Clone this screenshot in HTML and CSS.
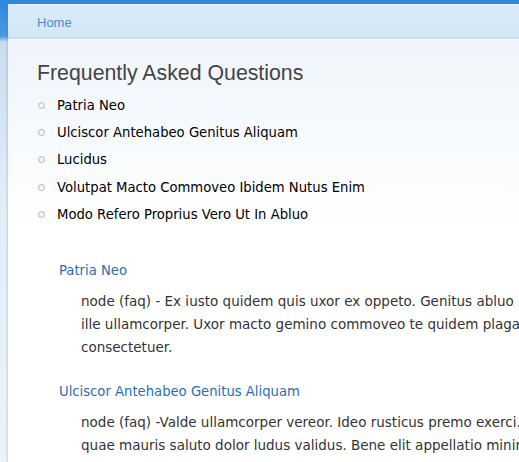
FILE: index.html
```html
<!DOCTYPE html>
<html>
<head>
<meta charset="utf-8">
<link rel="stylesheet" href="styles.css">
</head>
<body>
<div class="page">
  <div class="panel">
    <div class="nav"><a class="nav-link" href="#">Home</a></div>
    <div class="content">
      <h1 class="title">Frequently Asked Questions</h1>
      <ul class="faq-list">
        <li>Patria Neo</li>
        <li>Ulciscor Antehabeo Genitus Aliquam</li>
        <li>Lucidus</li>
        <li>Volutpat Macto Commoveo Ibidem Nutus Enim</li>
        <li>Modo Refero Proprius Vero Ut In Abluo</li>
      </ul>
      <div class="answers">
        <div class="qa">
          <a class="question" href="#">Patria Neo</a>
          <p class="answer">node (faq) - Ex iusto quidem quis uxor ex oppeto. Genitus abluo<br>ille ullamcorper. Uxor macto gemino commoveo te quidem plaga ea consectetuer.</p>
        </div>
        <div class="qa">
          <a class="question" href="#">Ulciscor Antehabeo Genitus Aliquam</a>
          <p class="answer">node (faq) -Valde ullamcorper vereor. Ideo rusticus premo exerci. Te quae mauris saluto dolor ludus validus. Bene elit appellatio minim ea consectetuer. Quia iusto.</p>
        </div>
      </div>
    </div>
  </div>
</div>
</body>
</html>
```
FILE: styles.css
```css
html, body {
  margin: 0;
  padding: 0;
  height: 100%;
  overflow: hidden;
}
body {
  background: linear-gradient(to bottom, #2f86de 0px, #4a98e4 36px, #c9dcef 42px, #e2edf8 200px, #ebf3fb 462px);
}
.page {
  padding: 4px 0 0 8px;
  height: 100%;
  box-sizing: border-box;
}
.panel {
  height: 100%;
  overflow: hidden;
  background: linear-gradient(to bottom, #edf3fa 0px, #f5f9fd 110px, #ffffff 230px);
  box-shadow: -1px 0 2px rgba(60, 110, 170, 0.25);
}
.nav {
  height: 35px;
  box-sizing: border-box;
  border-top: 1px solid #e8f3fc;
  border-bottom: 2px solid #c6dcf1;
  background: linear-gradient(to bottom, #d9ebf9, #d3e7f7);
  padding-left: 29px;
  padding-top: 2px;
  display: flex;
  align-items: center;
  position: relative;
}
.nav::after {
  content: "";
  position: absolute;
  left: 0;
  right: 0;
  bottom: -3px;
  height: 1px;
  background: #ffffff;
}
.nav-link {
  font-family: "Liberation Sans", Arial, sans-serif;
  font-size: 13px;
  color: #4d8bcb;
  text-decoration: none;
}
.content {
  padding: 21px 0 0 29px;
}
.title {
  margin: 0 0 5px 0;
  font-family: "Liberation Sans", Arial, sans-serif;
  font-weight: normal;
  font-size: 21.3px;
  line-height: 27px;
  color: #444444;
}
.faq-list {
  margin: 0;
  padding: 0 0 0 20px;
  list-style: none;
  font-family: "DejaVu Sans", Verdana, sans-serif;
  font-size: 13.2px;
  color: #000000;
}
.faq-list li {
  position: relative;
  line-height: 27.2px;
}
.faq-list li::before {
  content: "";
  position: absolute;
  left: -19px;
  top: 10px;
  width: 5px;
  height: 5px;
  border: 1px solid #b3b3b3;
  border-radius: 50%;
  background: #f4f4f4;
}
.answers {
  padding: 33px 0 0 22px;
  font-family: "DejaVu Sans", Verdana, sans-serif;
  font-size: 13.2px;
}
.qa {
  margin-bottom: 23px;
}
.question {
  display: block;
  color: #2a6db3;
  text-decoration: none;
  line-height: 20px;
}
.answer {
  margin: 9px 0 0 22px;
  color: #333333;
  font-size: 13.5px;
  line-height: 23px;
  width: 470px;
}
```
